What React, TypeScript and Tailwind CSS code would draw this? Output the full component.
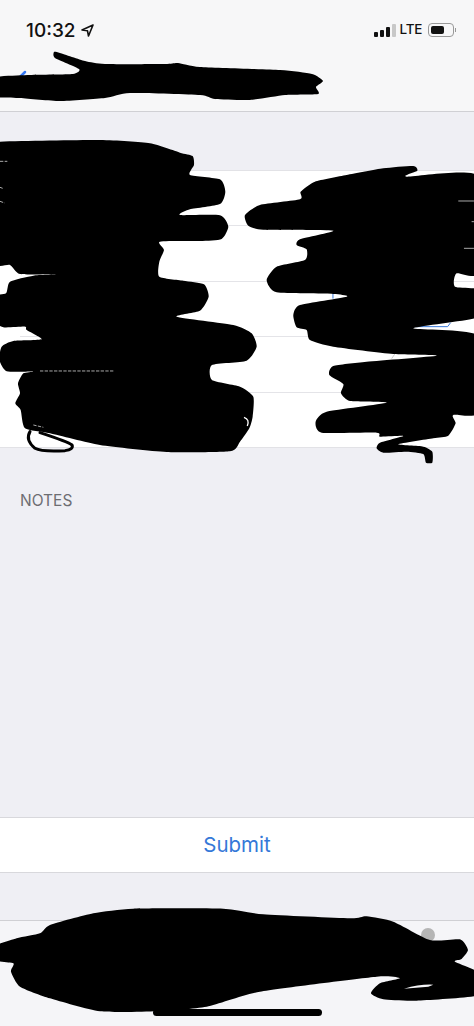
const FONT = { fontFamily: "Inter, 'Liberation Sans', sans-serif" };

type Pt = [number, number];

// catmull-rom outline through the points, for the marker scribbles
const smooth = (pts: Pt[]) => {
  const n = pts.length;
  let d = `M${pts[0][0]} ${pts[0][1]}`;
  for (let i = 0; i < n; i++) {
    const p0 = pts[(i - 1 + n) % n];
    const p1 = pts[i];
    const p2 = pts[(i + 1) % n];
    const p3 = pts[(i + 2) % n];
    const t = 0.1;
    d += ` C${p1[0] + (p2[0] - p0[0]) * t} ${p1[1] + (p2[1] - p0[1]) * t} ${p2[0] - (p3[0] - p1[0]) * t} ${p2[1] - (p3[1] - p1[1]) * t} ${p2[0]} ${p2[1]}`;
  }
  return d + " Z";
};

const HEADER_BLOB: Pt[] = [
  [-10, 78], [30, 75], [73, 74], [79, 69], [55, 58], [54, 52], [60, 53], [85, 61], [105, 64], [165, 64], [178, 63], [200, 67], [280, 70], [312, 74],
  [323, 81], [316, 87], [318, 94], [285, 95], [250, 100], [215, 99], [200, 95], [130, 93], [105, 98], [60, 101], [20, 98], [-10, 96],
];

const LEFT_BLOB: Pt[] = [
  [-20, 36], [300, 30], [450, 40], [540, 68], [578, 78], [582, 105], [570, 135], [660, 148], [676, 185], [660, 222], [570, 238], [540, 255], [660, 256],
  [685, 290], [665, 327], [600, 333], [480, 335], [492, 360], [478, 395], [478, 440], [550, 452], [612, 463], [626, 500], [600, 542], [530, 560], [700, 585],
  [755, 610], [770, 650], [740, 692], [636, 705], [636, 750], [720, 770], [760, 800], [758, 860], [748, 895], [720, 935], [690, 964], [500, 966], [300, 945],
  [150, 910], [75, 895], [62, 840], [46, 820], [60, 790], [54, 760], [70, 730], [100, 725], [20, 724], [-2, 690], [5, 650], [40, 633], [125, 628], [80, 600],
  [75, 590], [10, 592], [-20, 570], [-20, 500], [18, 490], [30, 455], [100, 437], [170, 433], [60, 432], [30, 405], [-20, 398], [-20, 200], [-20, 60],
];

const RIGHT_BLOB: Pt[] = [
  [1252, 122], [1240, 108], [1150, 115], [1040, 135], [945, 155], [902, 185], [900, 208], [780, 225], [735, 255], [745, 287], [790, 299], [1000, 302],
  [900, 328], [890, 345], [920, 358], [915, 390], [830, 410], [800, 450], [830, 487], [1000, 492], [1040, 500], [900, 525], [880, 555], [890, 592], [920, 600],
  [930, 630], [1000, 650], [1180, 672], [1310, 677], [1100, 695], [1000, 708], [988, 735], [1030, 762], [1023, 790], [1050, 813], [1160, 818], [980, 845],
  [947, 875], [965, 908], [1130, 908], [1140, 920], [1210, 918], [1140, 938], [1130, 955], [1150, 968], [1220, 965], [1270, 972], [1278, 998], [1297, 998],
  [1297, 965], [1270, 950], [1195, 943], [1300, 925], [1345, 917], [1367, 880], [1360, 855], [1440, 845], [1440, 620], [1240, 595], [1440, 560], [1440, 480],
  [1365, 470], [1370, 430], [1440, 425], [1440, 140], [1220, 140],
];

const BOTTOM_BLOB: Pt[] = [
  [-20, 440], [50, 415], [120, 400], [150, 375], [280, 340], [400, 326], [670, 326], [790, 343], [1050, 355], [1100, 349], [1180, 365], [1290, 420], [1380, 418],
  [1404, 450], [1385, 477], [1365, 485], [1440, 520], [1440, 585], [1250, 602], [1150, 598], [1113, 580], [1140, 550], [1200, 535], [1130, 530], [780, 575],
  [620, 620], [470, 634], [300, 634], [150, 595], [60, 560], [33, 515], [40, 490], [-20, 480],
];

const Scribbles = () => (
  <svg className="absolute left-0 top-0" width="474" height="1026" viewBox="0 0 474 1026" fill="none">
    <path d="M20 77 L25 72" stroke="#3478f6" strokeWidth="2.5" strokeLinecap="round" />
    <path d={smooth(HEADER_BLOB)} fill="#000" />
    <g transform="translate(0 130) scale(0.3333)">
      <path d="M999 490 V506 M1240 590 H1343 L1352 578" stroke="#3a78d8" strokeWidth="3" />
      <path d="M1175 686 L1186 670" stroke="#ccc" strokeWidth="3" />
      <path d={smooth(LEFT_BLOB)} fill="#000" />
      <path d={smooth(RIGHT_BLOB)} fill="#000" />
      <path d="M90 905 Q75 930 105 955 Q125 966 195 962 Q222 958 216 945 Q205 936 120 908" stroke="#000" strokeWidth="9" strokeLinecap="round" />
      {/* gaps the marker left */}
      <path d="M0 94 H22 M0 172 L8 175 M0 214 L14 219 M120 723 H340 M100 885 L130 892" stroke="#fff" strokeWidth="2" strokeDasharray="10 4" />
      <path d="M732 862 Q750 868 742 888" stroke="#fff" strokeWidth="4" />
      <path d="M1375 213 H1422 M1415 275 H1422 M1392 355 H1422" stroke="#fff" strokeWidth="2" />
    </g>
    <circle cx="428" cy="935" r="7" fill="#b5b5b5" />
    <g transform="translate(0 800) scale(0.3333)">
      <path d={smooth(BOTTOM_BLOB)} fill="#000" />
      <path d="M1212 566 Q1260 552 1300 554 L1285 560 Z" fill="#f5f5f8" />
    </g>
  </svg>
);

const StatusBar = () => (
  <div className="flex h-[58px] items-center justify-between pl-[26px] pr-[18px] pt-[2px] text-[#111]">
    <div className="flex items-center gap-[5px]">
      <span className="text-[19px] font-medium leading-none">10:32</span>
      <svg width="13" height="13" viewBox="0 0 13 13" fill="none">
        <path d="M12 1 L1 6 L6.5 6.8 L7.5 12 Z" stroke="#111" strokeWidth="1.6" strokeLinejoin="round" />
      </svg>
    </div>
    <div className="flex items-center">
      <div className="flex items-end gap-[2px]">
        <span className="h-[5px] w-[4px] rounded-[1px] bg-[#111]" />
        <span className="h-[7px] w-[4px] rounded-[1px] bg-[#111]" />
        <span className="h-[10px] w-[4px] rounded-[1px] bg-[#111]" />
        <span className="h-[13px] w-[4px] rounded-[1px] bg-[#c8c8c8]" />
      </div>
      <span className="ml-[4px] text-[13.5px] font-medium leading-none tracking-[-0.3px]">LTE</span>
      <div className="ml-[6px] flex items-center">
        <div className="flex h-[14px] w-[26px] items-center rounded-[4px] border border-[#999] p-[2px]">
          <span className="h-full w-[13px] rounded-[2px] bg-[#111]" />
        </div>
        <span className="ml-[1px] h-[4px] w-[1px] bg-[#999]" />
      </div>
    </div>
  </div>
);

export default function App() {
  return (
    <div className="relative flex h-[1026px] w-[474px] flex-col overflow-hidden bg-[#efeff4]" style={FONT}>
      <header className="h-[112px] border-b border-[#d0d0d4] bg-[#f7f7f8]">
        <StatusBar />
      </header>

      <div className="h-[58px]" />

      <div className="border-y border-[#e2e2e6] bg-white pl-[20px]">
        <div className="h-[55px] border-b border-[#e4e4e8]" />
        <div className="h-[56px] border-b border-[#e4e4e8]" />
        <div className="h-[55px] border-b border-[#e4e4e8]" />
        <div className="h-[56px] border-b border-[#e4e4e8]" />
        <div className="h-[54px]" />
      </div>

      <div className="flex h-[369px] flex-col pl-[20px] pt-[44px]">
        <span className="text-[15.5px] leading-[18px] text-[#6d6d72]">NOTES</span>
      </div>

      <button type="button" className="flex h-[56px] items-center justify-center border-y border-[#d8d8dc] bg-white text-[20.5px] text-[#3478d8]">
        Submit
      </button>

      <div className="h-[47px]" />

      <div className="flex-1 border-t border-[#d0d0d4] bg-[#f5f5f8]" />

      <Scribbles />
      <div className="absolute left-[153px] top-[1009px] h-[7px] w-[169px] rounded-full bg-black" />
    </div>
  );
}
